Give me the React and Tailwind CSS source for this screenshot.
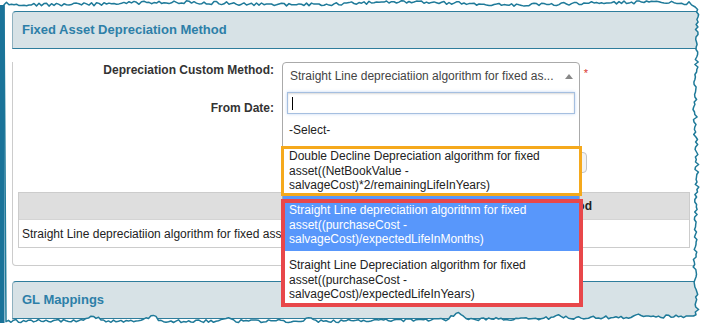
import React from 'react';

// seeded jitter so the torn edge looks the same on every render
const rnd = (i) => {
  const x = Math.sin(i * 127.1 + 311.7) * 43758.5453;
  return x - Math.floor(x);
};

const bumps = [
  [93, 6, 9],
  [152, 6, 9],
  [228, 3, 6],
  [310, 3, 8],
  [457, 7, 10],
  [560, 3, 7],
  [640, 2, 6],
];

const tornPath = () => {
  const pts = [];
  let i = 0;
  for (let x = 4; x <= 692; x += 2.5) {
    pts.push([x, 3.5 + (rnd(i++) - 0.5) * 3.2 + Math.sin(x / 37) * 1.2]);
  }
  for (let y = 7; y <= 314; y += 2.5) {
    pts.push([696 + (rnd(i++ + 500) - 0.5) * 4 + Math.sin(y / 23), y]);
  }
  for (let x = 696; x >= 4; x -= 2.5) {
    let y = 321 - (x > 352 ? ((x - 352) / 350) * 5 : 0) + (rnd(i++ + 1000) - 0.5) * 3;
    bumps.forEach(([cx, h, w]) => {
      const d = Math.abs(x - cx);
      if (d < w) y -= h * (1 - d / w);
    });
    pts.push([x, y]);
  }
  return 'M' + pts.map(([x, y]) => `${x.toFixed(1)} ${y.toFixed(1)}`).join(' L') + ' Z';
};

const TornFrame = () => {
  const inner = tornPath();
  return (
    <svg className="absolute inset-0 pointer-events-none" width="704" height="327" viewBox="0 0 704 327">
      <path d={`M0 0 H704 V327 H0 Z ${inner}`} fill="#ffffff" fillRule="evenodd" />
      <path d={inner} fill="none" stroke="#1f7a99" strokeWidth="1.5" strokeLinejoin="round" />
      <rect x="0" y="5" width="4.5" height="318" fill="#1a7399" />
    </svg>
  );
};

const PanelHeader = ({ title }) => (
  <div className="h-[38px] flex items-center pl-[9px] bg-[#d7e2e6] border border-[#2e7d9c] border-l-[#8fb1bf] rounded-t-[4px]">
    <span className="text-[13px] font-bold text-[#2d7fa8]">{title}</span>
  </div>
);

const Option = ({ lines, className }) => (
  <div className={`pl-[6px] pt-[7px] leading-[14.5px] ${className}`}>
    {lines.map((l) => (
      <div key={l}>{l}</div>
    ))}
  </div>
);

export default function App() {
  return (
    <div className="relative w-[704px] h-[327px] overflow-hidden bg-white text-[12px] text-[#333] font-['Liberation_Sans',Arial,sans-serif]">
      <div className="pl-[12px] pt-[11px]">
        {/* Fixed Asset Depreciation Method */}
        <div className="w-[688px]">
          <PanelHeader title="Fixed Asset Depreciation Method" />
          <div className="border-x border-b border-[#cccccc] rounded-b-[4px] pb-[17px]">
            <div className="flex items-start mt-[13px]">
              <div className="w-[261px] text-right font-bold leading-[14px] pt-[1px]">Depreciation Custom Method:</div>
              <div className="relative ml-[8px] w-[298px] h-[27px] border border-[#aaaaaa] rounded-t-[4px] bg-white flex items-center pl-[7px] text-[#444]">
                <span className="flex-1">Straight Line depreciatiion algorithm for fixed as...</span>
                <span className="mr-[6px] mt-[1px] w-0 h-0 border-x-[4px] border-x-transparent border-b-[5px] border-b-[#888888]" />
                <span className="absolute -right-[9px] top-[2px] text-[#d9342b] text-[11px]">*</span>

                {/* open dropdown */}
                <div className="absolute left-[-1px] top-full w-[298px] bg-white border border-t-0 border-[#aaaaaa] z-10 text-[#222]">
                  <div className="h-[30px] pt-[4px] px-[4px]">
                    <div className="h-[22px] border border-[#a5bfe0] shadow-[inset_0_1px_2px_rgba(0,0,0,0.15),0_0_3px_rgba(82,140,220,0.35)] bg-white flex items-center pl-[4px]">
                      <span className="w-px h-[13px] bg-black" />
                    </div>
                  </div>
                  <div className="h-[27px] pl-[6px] pt-[5px] leading-[14.5px]">-Select-</div>
                  <Option
                    className="h-[51px] !pt-[4px]"
                    lines={['Double Decline Depreciation algorithm for fixed', 'asset((NetBookValue -', 'salvageCost)*2/remainingLifeInYears)']}
                  />
                  <Option
                    className="h-[55px] bg-[#5897fb] text-white"
                    lines={['Straight Line depreciatiion algorithm for fixed', 'asset((purchaseCost -', 'salvageCost)/expectedLifeInMonths)']}
                  />
                  <Option
                    className="h-[52px]"
                    lines={['Straight Line Depreciation algorithm for fixed', 'asset((purchaseCost -', 'salvageCost)/expectedLifeInYears)']}
                  />
                </div>
              </div>
            </div>

            <div className="flex items-start mt-[8px]">
              <div className="w-[261px] text-right font-bold leading-[14px] pt-[4px]">From Date:</div>
              <div className="ml-[8px] w-[298px] h-[24px] border border-[#cccccc] rounded-[3px]" />
            </div>

            <div className="mt-[31px] ml-[269px] w-[305px] h-[21px] border border-[#c4c4c4] rounded-[4px] bg-[#f3f3f3]" />

            <div className="mt-[19px] ml-[5px] w-[672px] border border-[#cccccc]">
              <div className="h-[26px] bg-[#dedede] flex items-center justify-end pr-[97px] font-bold text-[#222]">
                <span className="w-[14px] overflow-hidden whitespace-nowrap flex justify-end">Depreciation Custom Method</span>
              </div>
              <div className="h-[28px] border-t border-[#d4d4d4] flex items-center pl-[3px] text-[#222]">
                <span className="w-[260px] overflow-hidden whitespace-nowrap">
                  Straight Line depreciatiion algorithm for fixed asset((purchaseCost - salvageCost)/expectedLifeInMonths)
                </span>
              </div>
            </div>
          </div>
        </div>

        {/* GL Mappings */}
        <div className="w-[688px] mt-[15px]">
          <PanelHeader title="GL Mappings" />
          <div className="h-[40px] border-x border-[#cccccc]" />
        </div>
      </div>

      {/* annotation boxes */}
      <div className="absolute left-[281px] top-[146px] w-[301px] h-[50px] border-[3px] border-[#f5a91c] z-20" />
      <div className="absolute left-[281px] top-[199px] w-[302px] h-[108px] border-[4px] border-[#e8474a] z-20" />

      <TornFrame />
    </div>
  );
}
